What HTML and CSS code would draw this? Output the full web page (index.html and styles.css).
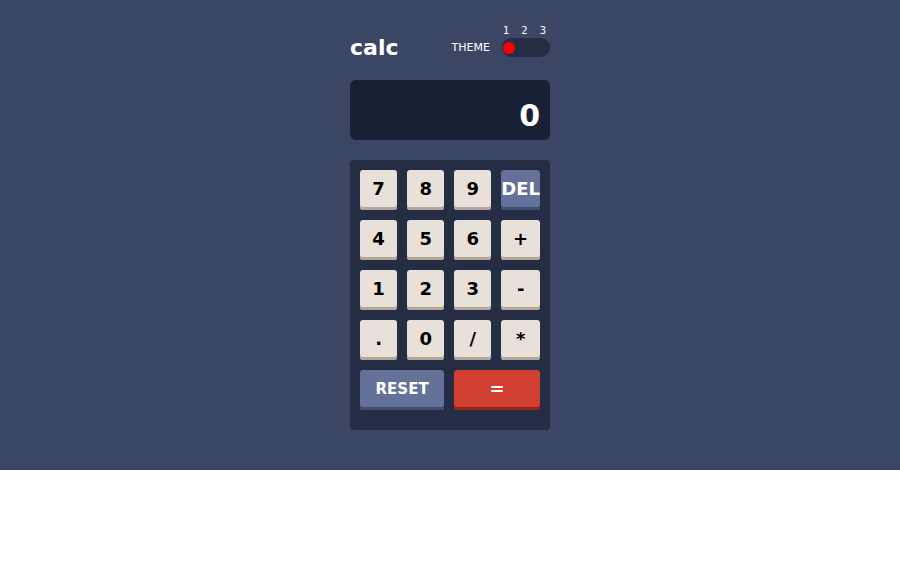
FILE: index.html
```html
<!DOCTYPE html>
<html>
<head>
<meta charset="utf-8">
<link rel="stylesheet" href="styles.css">
</head>
<body>
<div class="page">
  <div class="calc">
    <header class="head">
      <h1 class="logo">calc</h1>
      <div class="theme">
        <span class="theme-label">THEME</span>
        <div class="theme-ctl">
          <div class="nums"><span>1</span><span>2</span><span>3</span></div>
          <div class="toggle"><span class="dot"></span></div>
        </div>
      </div>
    </header>
    <div class="screen">0</div>
    <div class="pad">
      <button class="key">7</button>
      <button class="key">8</button>
      <button class="key">9</button>
      <button class="key key-blue">DEL</button>
      <button class="key">4</button>
      <button class="key">5</button>
      <button class="key">6</button>
      <button class="key">+</button>
      <button class="key">1</button>
      <button class="key">2</button>
      <button class="key">3</button>
      <button class="key">-</button>
      <button class="key">.</button>
      <button class="key">0</button>
      <button class="key">/</button>
      <button class="key">*</button>
      <button class="key key-blue key-wide key-reset">RESET</button>
      <button class="key key-red key-wide">=</button>
    </div>
  </div>
</div>
</body>
</html>
```
FILE: styles.css
```css
* { box-sizing: border-box; }
html, body { margin: 0; padding: 0; background: #ffffff; }
body { font-family: "DejaVu Sans", sans-serif; }
.page {
  background: #3b4664;
  height: 470px;
  padding-top: 21px;
}
.calc {
  width: 200px;
  margin: 0 auto;
}
.head {
  display: flex;
  justify-content: space-between;
  align-items: flex-end;
  height: 36px;
}
.logo {
  margin: 0 0 -4px;
  color: #ffffff;
  font-size: 22px;
  font-weight: bold;
  line-height: 26px;
}
.theme {
  display: flex;
  align-items: flex-end;
  gap: 12px;
}
.theme-label {
  color: #ffffff;
  font-size: 11px;
  line-height: 12px;
  margin-bottom: 3px;
}
.theme-ctl {
  width: 48px;
  display: flex;
  flex-direction: column;
  gap: 1px;
}
.nums {
  display: flex;
  justify-content: space-between;
  padding: 0 4px 0 1px;
  color: #ffffff;
  font-size: 10px;
  line-height: 12px;
}
.toggle {
  height: 19px;
  border-radius: 10px;
  background: #252d44;
  display: flex;
  align-items: center;
  padding-left: 1px;
}
.dot {
  width: 12px;
  height: 12px;
  border-radius: 50%;
  background: #ff0000;
}
.screen {
  margin-top: 23px;
  height: 60px;
  background: #182034;
  border-radius: 6px;
  color: #ffffff;
  font-size: 30px;
  font-weight: bold;
  text-align: right;
  padding: 17px 10px 0 0;
  line-height: 38px;
}
.pad {
  margin-top: 20px;
  background: #252d44;
  border-radius: 4px;
  padding: 10px 10px 20px;
  display: grid;
  grid-template-columns: repeat(4, 1fr);
  gap: 10px;
}
.key {
  height: 40px;
  border: none;
  border-radius: 3px;
  background: #e8e1d9;
  box-shadow: inset 0 -3px 0 #b4a597;
  color: #000000;
  font-family: "DejaVu Sans", sans-serif;
  font-size: 18px;
  font-weight: bold;
  padding: 0 0 3px;
  white-space: nowrap;
  display: flex;
  align-items: center;
  justify-content: center;
  overflow: visible;
}
.key-blue {
  background: #647198;
  box-shadow: inset 0 -3px 0 #414e73;
  color: #ffffff;
}
.key-red {
  background: #d03f2f;
  box-shadow: inset 0 -3px 0 #93261a;
  color: #ffffff;
}
.key-wide {
  grid-column: span 2;
}
.key-reset {
  font-size: 15px;
}
```
